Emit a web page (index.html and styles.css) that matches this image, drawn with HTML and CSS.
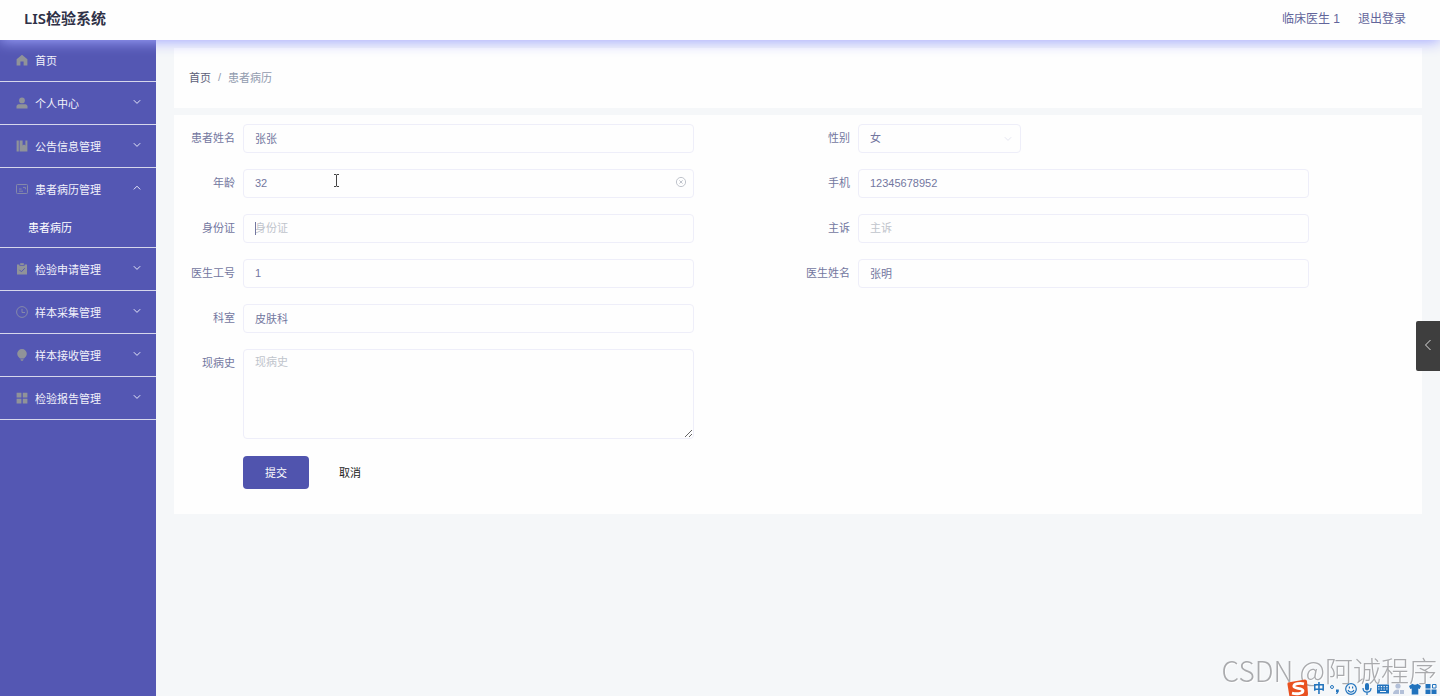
FILE: index.html
```html
<!DOCTYPE html>
<html lang="zh-CN">
<head>
    <meta charset="UTF-8">
    <meta name="viewport" content="width=device-width, initial-scale=1.0">
    <title>LIS检验系统</title>
    <link rel="stylesheet" href="styles.css">
</head>
<body>
    <header class="header">
        <h1 class="title">LIS检验系统</h1>
        <div class="user">
            <a href="#">临床医生 1</a>
            <a href="#">退出登录</a>
        </div>
    </header>

    <div class="container">
        <nav class="sidebar">
            <ul class="menu">
                <li><a class="menu-item home" href="#">
                    <svg class="icon" viewBox="0 0 12 12"><path d="M6 .8 11.4 5.3V11.5H7.6V7.6H4.4v3.9H.6V5.3z"/></svg>
                    <span>首页</span>
                </a></li>
                <li><button class="menu-item" type="button">
                    <svg class="icon" viewBox="0 0 12 12"><circle cx="6" cy="3.4" r="2.9"/><path d="M.5 11.6V9.4C.5 7.8 2 7.2 3.6 7.2h4.8c1.6 0 3.1.6 3.1 2.2v2.2z"/></svg>
                    <span>个人中心</span>
                    <svg class="arrow" viewBox="0 0 8 8"><path d="M.8 2.2 4 5.4l3.2-3.2"/></svg>
                </button></li>
                <li><button class="menu-item" type="button">
                    <svg class="icon" viewBox="0 0 12 12"><path d="M.6.6h2.2v10.8H.6zM3.6.6h3v5l1.4-1.2 1.4 1.2v-5h2v10.8H3.6z"/></svg>
                    <span>公告信息管理</span>
                    <svg class="arrow" viewBox="0 0 8 8"><path d="M.8 2.2 4 5.4l3.2-3.2"/></svg>
                </button></li>
                <li>
                    <button class="menu-item" type="button">
                        <svg class="icon line" viewBox="0 0 12 12"><rect x=".5" y="1.5" width="11" height="9" rx=".8"/><path d="M3 6h2.6M3 8.200h4M7 4.400h2.400v1.800"/></svg>
                        <span>患者病历管理</span>
                        <svg class="arrow" viewBox="0 0 8 8"><path d="M.8 5.4 4 2.2l3.2 3.2"/></svg>
                    </button>
                    <a class="sub-item" href="#">患者病历</a>
                </li>
                <li><button class="menu-item" type="button">
                    <svg class="icon" viewBox="0 0 12 12"><path d="M1 1.400h2.400v1.400h5.200V1.400H11v10.200H1z"/><path d="M4.200.2h3.600v1.800H4.200z"/><path class="tick" d="m3.400 6.800 2 2 3.400-3.600"/></svg>
                    <span>检验申请管理</span>
                    <svg class="arrow" viewBox="0 0 8 8"><path d="M.8 2.2 4 5.4l3.2-3.2"/></svg>
                </button></li>
                <li><button class="menu-item" type="button">
                    <svg class="icon line" viewBox="0 0 12 12"><circle cx="6" cy="6" r="5.400"/><path d="M6 2.800V6.500h3"/></svg>
                    <span>样本采集管理</span>
                    <svg class="arrow" viewBox="0 0 8 8"><path d="M.8 2.2 4 5.4l3.2-3.2"/></svg>
                </button></li>
                <li><button class="menu-item" type="button">
                    <svg class="icon" viewBox="0 0 12 12"><path d="M6 0a4.800 4.800 0 0 1 4.800 4.800C10.800 7 9.200 8.200 8 9.600H4C2.800 8.200 1.200 7 1.200 4.800A4.800 4.800 0 0 1 6 0zM4.400 10.200h3.200L7 11.800H5z"/></svg>
                    <span>样本接收管理</span>
                    <svg class="arrow" viewBox="0 0 8 8"><path d="M.8 2.2 4 5.4l3.2-3.2"/></svg>
                </button></li>
                <li><button class="menu-item" type="button">
                    <svg class="icon" viewBox="0 0 12 12"><path d="M.6.8h4.800v4.600H.6zM6.800.8h4.600v4.600H6.800zM.6 6.800h4.800v4.600H.6zM6.800 6.800h4.600v4.600H6.800z"/></svg>
                    <span>检验报告管理</span>
                    <svg class="arrow" viewBox="0 0 8 8"><path d="M.8 2.2 4 5.4l3.2-3.2"/></svg>
                </button></li>
            </ul>
        </nav>

        <main class="main">
            <div class="breadcrumb">
                <a href="#">首页</a>
                <span class="separator">/</span>
                <span>患者病历</span>
            </div>

            <form class="form">
                <div class="form-item">
                    <label for="name">患者姓名</label>
                    <input type="text" id="name" value="张张">
                </div>
                <div class="form-item">
                    <label for="sex">性别</label>
                    <div class="field select">
                        <select id="sex">
                            <option>女</option>
                            <option>男</option>
                        </select>
                        <svg class="select-arrow" viewBox="0 0 8 8"><path d="M.8 2.2 4 5.4l3.2-3.2"/></svg>
                    </div>
                </div>
                <div class="form-item">
                    <label for="age">年龄</label>
                    <div class="field">
                        <input type="text" id="age" value="32">
                        <button class="clear" type="button" aria-label="清空">
                            <svg viewBox="0 0 12 12"><circle cx="6" cy="6" r="4.600"/><path d="m4.400 4.400 3.200 3.200m0-3.200L4.400 7.600"/></svg>
                        </button>
                        <svg class="pointer" viewBox="0 0 7 13"><path d="M1 .5h2l.5.500.500-.500h2M3.500 1v11M1 12.500h2l.500-.500.500.500h2"/></svg>
                    </div>
                </div>
                <div class="form-item">
                    <label for="phone">手机</label>
                    <input type="text" id="phone" value="12345678952">
                </div>
                <div class="form-item">
                    <label for="idcard">身份证</label>
                    <div class="field">
                        <input type="text" id="idcard" placeholder="身份证">
                        <span class="caret"></span>
                    </div>
                </div>
                <div class="form-item">
                    <label for="complaint">主诉</label>
                    <input type="text" id="complaint" placeholder="主诉">
                </div>
                <div class="form-item">
                    <label for="doctor-no">医生工号</label>
                    <input type="text" id="doctor-no" value="1">
                </div>
                <div class="form-item">
                    <label for="doctor-name">医生姓名</label>
                    <input type="text" id="doctor-name" value="张明">
                </div>
                <div class="form-item first">
                    <label for="department">科室</label>
                    <input type="text" id="department" value="皮肤科">
                </div>
                <div class="form-item first">
                    <label for="history">现病史</label>
                    <textarea id="history" placeholder="现病史"></textarea>
                </div>
                <div class="buttons first">
                    <button class="submit" type="submit">提交</button>
                    <button class="cancel" type="button">取消</button>
                </div>
            </form>
        </main>
    </div>

    <button class="drawer" type="button" aria-label="展开">
        <svg viewBox="0 0 8 12"><path d="M6.500 1 1.500 6l5 5"/></svg>
    </button>

    <div class="watermark">CSDN @阿诚程序</div>

    <div class="ime">
        <svg class="ime-logo" viewBox="0 0 22 20"><path fill="#e9501f" d="M1 3.500 18 .5q1.500 0 2 1.500l1 13q0 2-1.500 2.500L5 20q-2 0-2.500-2L.5 5.500Q.3 4 1 3.500z"/><path fill="none" stroke="#fff" stroke-width="2.800" d="M17 4.800c-4-.8-10-.2-10.200 2.400C6.600 10 16 8.500 16 11.800c0 3-6.500 3.500-11 2.400"/></svg>
        <span>中</span>
        <svg viewBox="0 0 12 12"><circle cx="3" cy="4" r="1.500" fill="none" stroke="#2273bd"/><path d="M7 6.500h2.800v2L8.200 11H7l.8-2H7z"/></svg>
        <svg viewBox="0 0 12 12"><g fill="none" stroke="#2273bd" stroke-width="1.200"><circle cx="6" cy="6" r="5.300"/><path d="M4.400 3.500v2M7.600 3.500v2M3 7c1 2.700 5 2.700 6 0"/></g></svg>
        <svg viewBox="0 0 12 12"><rect x="4" y="0" width="4" height="7.500" rx="2"/><path fill="none" stroke="#2273bd" stroke-width="1.200" d="M2 5c0 5.500 8 5.500 8 0M6 9v3"/></svg>
        <svg viewBox="0 0 12 12"><path fill-rule="evenodd" d="M0 1.500h12v9H0zM1.200 3v1.200h1.300V3zm2.600 0v1.200h1.300V3zm2.700 0v1.200h1.300V3zm2.700 0v1.200h1.400V3zM1.200 5.400v1.200h1.300V5.400zm2.600 0v1.200h1.300V5.400zm2.700 0v1.200h1.300V5.400zm2.700 0v1.200h1.400V5.400zM3 7.900V9h6V7.900z"/></svg>
        <svg class="pale" viewBox="0 0 12 12"><circle cx="5" cy="3" r="2.600"/><path d="M0 11c0-6 9-6 10 0z"/><path stroke="#f5f7f9" d="M6.500 6.500h5v5h-5z"/></svg>
        <svg viewBox="0 0 12 12"><path d="M3.500.8q2.500 2 5 0L12 3l-1.300 3L9.300 5.400v6H2.700v-6L1.300 6 0 3z"/></svg>
        <svg viewBox="0 0 12 12"><path d="M.5 1h5v4.500h-5zM6.500 6.500h5V11h-5zM.5 6.500h5V11h-5z"/><path fill="none" stroke="#2273bd" d="M7.500 1.500H11V5H7.500z"/></svg>
    </div>
</body>
</html>
```

FILE: styles.css
```css
* {
    box-sizing: border-box;
}
body {
    margin: 0;
    min-height: 100vh;
    display: flex;
    flex-direction: column;
    background-color: #f5f7f9;
    font-family: "Liberation Sans", "Noto Sans CJK SC", sans-serif;
    font-size: 11px;
    color: #7377a0;
}
a {
    color: inherit;
    text-decoration: none;
}
button, input, select, textarea {
    font: inherit;
    color: inherit;
}
button {
    padding: 0;
    border: none;
    background: none;
    cursor: pointer;
}

/* header */
.header {
    position: relative;
    z-index: 1;
    display: flex;
    align-items: center;
    justify-content: space-between;
    height: 40px;
    padding: 0 34px 6px 24px;
    background-color: #fefefe;
    box-shadow: 0 2px 14px rgba(160, 165, 255, 0.95);
}
.title {
    margin: 0;
    font-family: "Noto Sans", "Noto Sans CJK SC", sans-serif;
    font-size: 15px;
    font-weight: 600;
    color: #2f3147;
}
.user {
    display: flex;
    gap: 18px;
    font-size: 12px;
    color: #62659b;
}

.container {
    flex: 1;
    display: flex;
}

/* sidebar */
.sidebar {
    width: 156px;
    background-color: #5457b3;
    color: #f2f2fb;
}
.menu {
    margin: 0;
    padding: 0;
    list-style: none;
}
.menu li {
    border-bottom: 1px solid #d6d7ec;
}
.menu-item {
    display: flex;
    align-items: center;
    gap: 7px;
    width: 100%;
    height: 42px;
    padding: 0 15px 1px 16px;
}
.home {
    height: 41px;
}
.icon {
    width: 12px;
    height: 12px;
    fill: #909399;
}
.line {
    fill: none;
    stroke: #8589aa;
}
.tick {
    fill: none;
    stroke: #5457b3;
}
.arrow {
    width: 8px;
    height: 8px;
    margin: 0 0 2px auto;
    fill: none;
    stroke: #e6e7f8;
}
.sub-item {
    display: block;
    padding-left: 28px;
    line-height: 37px;
    color: #fff;
}

/* content */
.main {
    flex: 1;
    padding: 8px 18px;
}
.breadcrumb {
    display: flex;
    align-items: center;
    gap: 7px;
    height: 60px;
    padding: 0 0 2px 15px;
    background-color: #fefefe;
    color: #919bae;
}
.breadcrumb a {
    color: #5c5f78;
}
.form {
    display: grid;
    grid-template-columns: 1fr 1fr;
    gap: 16px 104px;
    margin-top: 7px;
    padding: 9px 113px 25px 9px;
    background-color: #fefefe;
}
.form-item {
    display: flex;
    gap: 8px;
}
.first {
    grid-column: 1;
}
.form-item label {
    width: 52px;
    line-height: 29px;
    text-align: right;
}
.field {
    position: relative;
    flex: 1;
    display: flex;
}
.select {
    flex: none;
    width: 163px;
}
.form-item input, .form-item select, .form-item textarea {
    flex: 1;
    min-width: 0;
    height: 29px;
    padding: 0 11px 1px;
    border: 1px solid #eeeef9;
    border-radius: 4px;
    background-color: #fefefe;
    outline: none;
}
.form-item select {
    appearance: none;
}
.form-item textarea {
    height: 90px;
    padding-top: 3px;
}
.form-item ::placeholder {
    color: #c0c4cc;
}
.select-arrow {
    position: absolute;
    top: 11px;
    right: 9px;
    width: 8px;
    height: 8px;
    fill: none;
    stroke: #e4e5f0;
    pointer-events: none;
}
.clear {
    position: absolute;
    top: 7px;
    right: 7px;
    width: 12px;
    height: 12px;
}
.clear svg {
    display: block;
    fill: none;
    stroke: #c0c4cc;
}
.pointer {
    position: absolute;
    top: 5px;
    left: 90px;
    width: 7px;
    height: 13px;
    fill: none;
    stroke: #444;
}
.caret {
    position: absolute;
    top: 8px;
    left: 12px;
    width: 1px;
    height: 13px;
    background-color: #7377a0;
}
.buttons {
    display: flex;
    height: 34px;
    padding: 1px 0 0 60px;
}
.buttons button {
    width: 66px;
    padding-bottom: 2px;
}
.submit {
    border-radius: 4px;
    background-color: #5054ae;
    color: #fff;
}
.cancel {
    margin-left: 8px;
    color: #222;
}

/* floating items */
.drawer {
    position: fixed;
    top: 321px;
    right: 0;
    width: 24px;
    height: 50px;
    border-radius: 2px 0 0 2px;
    background-color: #3e3e3e;
}
.drawer svg {
    width: 8px;
    height: 12px;
    fill: none;
    stroke: #ddd;
}
.watermark {
    position: fixed;
    right: 3px;
    bottom: 12px;
    font-family: "Noto Sans CJK SC", sans-serif;
    font-size: 28px;
    font-weight: 300;
    line-height: 28px;
    color: #a9aaad;
    text-shadow: 1px 1px 1px #fff;
}
.ime {
    position: fixed;
    right: 3px;
    bottom: -3px;
    display: flex;
    align-items: center;
    gap: 4px;
    font-size: 12px;
    font-weight: 700;
    line-height: 12px;
    color: #2273bd;
}
.ime svg {
    width: 12px;
    height: 12px;
    fill: #2273bd;
}
.ime .ime-logo {
    width: 22px;
    height: 20px;
}
.ime .pale {
    fill: #b3c0d8;
}
```
